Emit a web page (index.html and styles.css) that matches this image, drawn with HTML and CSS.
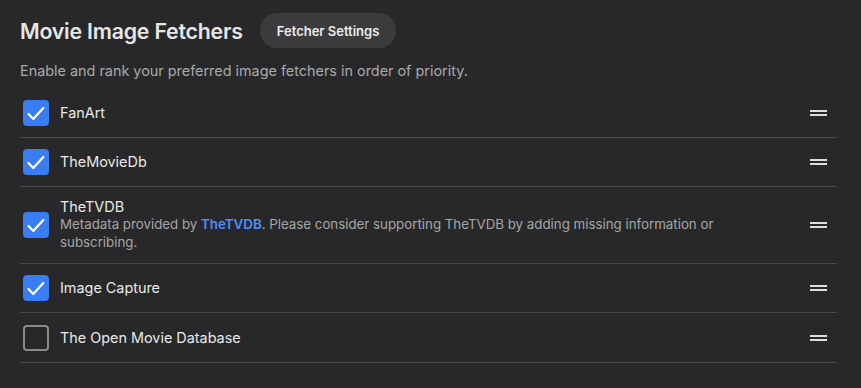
FILE: index.html
```html
<!DOCTYPE html>
<html>
<head>
<meta charset="utf-8">
<link rel="stylesheet" href="styles.css">
</head>
<body>
<div class="page">
  <div class="header">
    <h2 class="title">Movie Image Fetchers</h2>
    <button class="btn">Fetcher Settings</button>
  </div>
  <p class="sub">Enable and rank your preferred image fetchers in order of priority.</p>
  <div class="list">
    <div class="row">
      <span class="cb on"><svg viewBox="0 0 26 26"><path d="M5.5 14l4.8 5 10-11" /></svg></span>
      <div class="info"><div class="name">FanArt</div></div>
      <span class="handle"></span>
    </div>
    <div class="row">
      <span class="cb on"><svg viewBox="0 0 26 26"><path d="M5.5 14l4.8 5 10-11" /></svg></span>
      <div class="info"><div class="name">TheMovieDb</div></div>
      <span class="handle"></span>
    </div>
    <div class="row tall">
      <span class="cb on"><svg viewBox="0 0 26 26"><path d="M5.5 14l4.8 5 10-11" /></svg></span>
      <div class="info">
        <div class="name">TheTVDB</div>
        <div class="desc">Metadata provided by <a class="link" href="#">TheTVDB</a>. Please consider supporting TheTVDB by adding missing information or subscribing.</div>
      </div>
      <span class="handle"></span>
    </div>
    <div class="row">
      <span class="cb on"><svg viewBox="0 0 26 26"><path d="M5.5 14l4.8 5 10-11" /></svg></span>
      <div class="info"><div class="name">Image Capture</div></div>
      <span class="handle"></span>
    </div>
    <div class="row">
      <span class="cb"></span>
      <div class="info"><div class="name">The Open Movie Database</div></div>
      <span class="handle"></span>
    </div>
  </div>
</div>
</body>
</html>
```

FILE: styles.css
```css
html, body {
  margin: 0;
  background: #28282a;
}
body {
  font-family: Inter, "Noto Sans", sans-serif;
  color: #e2e2e2;
}
.page {
  padding: 13px 24px 0 20px;
}
.header {
  display: flex;
  align-items: center;
  gap: 17px;
}
.title {
  margin: 0;
  font-size: 21.3px;
  font-weight: 600;
  color: #e6e6e6;
  letter-spacing: -0.2px;
}
.btn {
  font-family: inherit;
  height: 35px;
  padding: 0 17px;
  border: none;
  border-radius: 18px;
  background: #3b3b3e;
  color: #ececec;
  font-size: 13px;
  font-weight: 600;
}
.sub {
  margin: 14px 0 10px;
  font-size: 14.4px;
  color: #a8a8a8;
}
.list {
  display: flex;
  flex-direction: column;
}
.row {
  display: flex;
  align-items: center;
  min-height: 48px;
  border-bottom: 1px solid #48484a;
  padding: 0 10px 0 3px;
}
.row.tall {
  min-height: 76px;
}
.row:last-child {
  min-height: 49px;
}
.cb {
  flex: none;
  width: 26px;
  height: 26px;
  box-sizing: border-box;
  border-radius: 4px;
  border: 2px solid #8a8a8a;
  margin-right: 11px;
  display: flex;
}
.cb.on {
  background: #3a7cf2;
  border: none;
}
.cb svg {
  width: 26px;
  height: 26px;
  fill: none;
  stroke: #fff;
  stroke-width: 2.2;
  stroke-linecap: round;
  stroke-linejoin: round;
}
.info {
  flex: 1;
}
.name {
  font-size: 14.4px;
  font-weight: 400;
  color: #e8e8e8;
  margin-top: -1px;
}
.desc {
  font-size: 13.3px;
  line-height: 18px;
  color: #a6a6a6;
  padding-right: 95px;
}
.link {
  color: #4e8ef7;
  font-weight: 600;
  text-decoration: none;
}
.handle {
  flex: none;
  width: 17px;
  height: 2px;
  border-top: 2px solid #dedede;
  border-bottom: 2px solid #dedede;
}
```
